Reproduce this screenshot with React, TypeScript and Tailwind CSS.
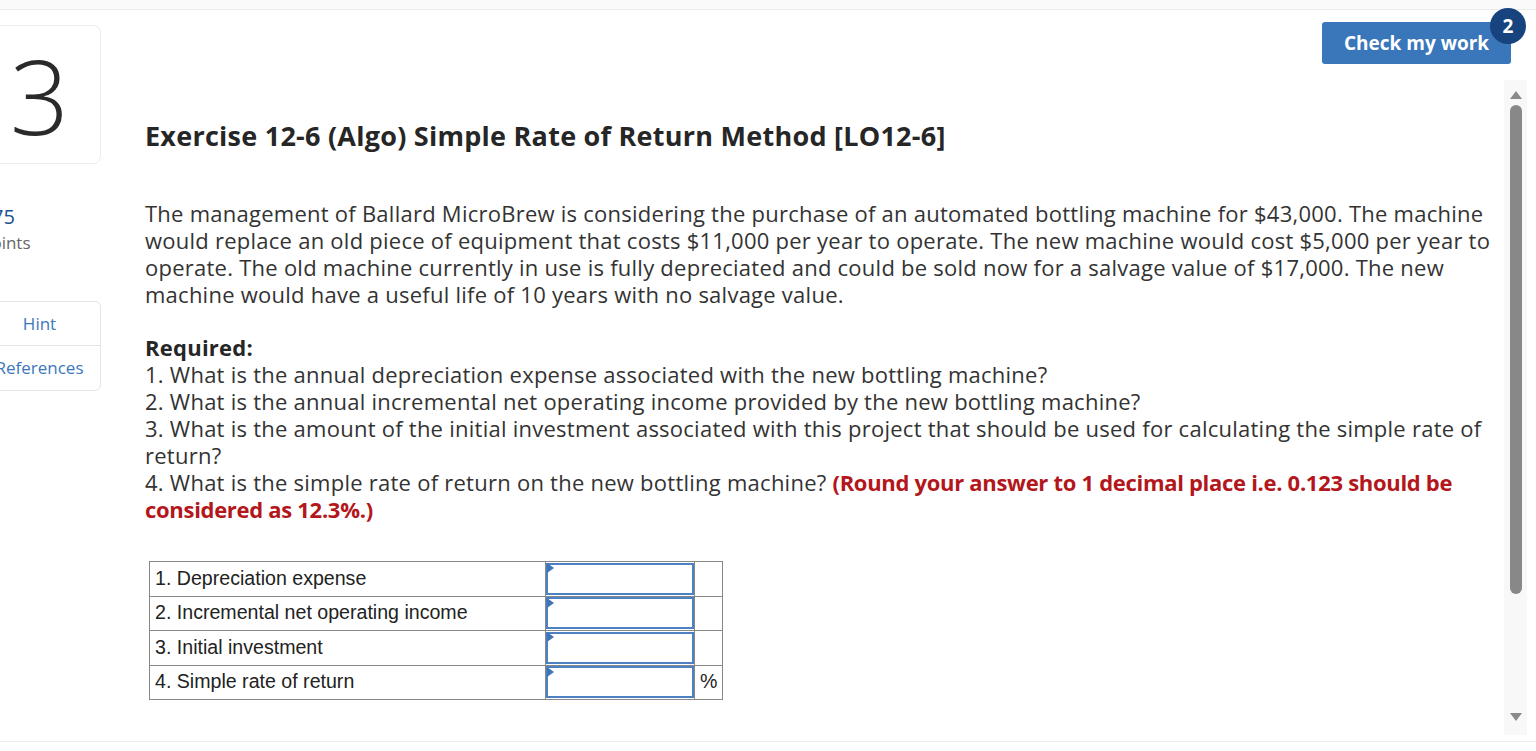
import React from 'react';

const rows = [
  { label: '1. Depreciation expense', unit: '' },
  { label: '2. Incremental net operating income', unit: '' },
  { label: '3. Initial investment', unit: '' },
  { label: '4. Simple rate of return', unit: '%' },
];

const intro = [
  'The management of Ballard MicroBrew is considering the purchase of an automated bottling machine for $43,000. The machine',
  'would replace an old piece of equipment that costs $11,000 per year to operate. The new machine would cost $5,000 per year to',
  'operate. The old machine currently in use is fully depreciated and could be sold now for a salvage value of $17,000. The new',
  'machine would have a useful life of 10 years with no salvage value.',
];

function AnswerRow({ label, unit }: { label: string; unit: string }) {
  return (
    <tr className="h-[34.5px]">
      <td className="border border-[#888] px-[5px] text-[19.6px] leading-none text-[#222]">{label}</td>
      <td className="relative border border-[#888] p-0">
        <div className="h-[32px] border-2 border-[#4d82c2] bg-white" />
        <span className="absolute left-[1px] top-[1px] h-0 w-0 border-y-[5px] border-l-[7px] border-y-transparent border-l-[#3d74ba]" />
      </td>
      <td className="border border-[#888] px-[5px] text-[19.6px] leading-none text-[#222]">{unit}</td>
    </tr>
  );
}

export default function App() {
  return (
    <div className="h-[751px] w-[1536px] overflow-hidden bg-white font-['Open_Sans',sans-serif] text-[#333]">
      <div className="h-[10px] border-b border-[#ececec] bg-[#fafafa]" />

      <div className="relative flex h-[732px] border-b border-[#ececec]">
        {/* left rail */}
        <div className="-ml-[22px] flex w-[123px] shrink-0 flex-col pt-[15px]">
          <div className="flex h-[139px] items-center justify-center rounded-[8px] border border-[#ececec] bg-white">
            <span className="text-[104px] leading-none font-light text-[#2a2a2a]">3</span>
          </div>
          <div className="mt-[40px]">
            <p className="pl-[14px] text-[20px] leading-[26px] text-[#1d4f91]">75</p>
            <p className="pl-[3px] text-[17px] leading-[26px] text-[#666]">points</p>
          </div>
          <div className="mt-[45px] rounded-[6px] border border-[#e4e4e4] text-[17px] text-[#3b77bb]">
            <div className="flex h-[44px] items-center justify-center border-b border-[#e4e4e4]">Hint</div>
            <div className="flex h-[44px] items-center justify-center">References</div>
          </div>
        </div>

        {/* question */}
        <div className="ml-[44px] min-w-0 flex-1 pt-[110px]">
          <h1 className="text-[27px] leading-[32px] font-bold tracking-[0.25px] whitespace-nowrap text-[#262626]">
            Exercise 12-6 (Algo) Simple Rate of Return Method [LO12-6]
          </h1>
          <div className="mt-[48px] text-[22px] leading-[27px] tracking-[0.25px] whitespace-nowrap">
            {intro.map((line) => (
              <p key={line}>{line}</p>
            ))}
          </div>
          <div className="mt-[26px] text-[22px] leading-[27px] tracking-[0.25px] whitespace-nowrap">
            <p className="font-bold text-[#262626]">Required:</p>
            <p>1. What is the annual depreciation expense associated with the new bottling machine?</p>
            <p>2. What is the annual incremental net operating income provided by the new bottling machine?</p>
            <p>3. What is the amount of the initial investment associated with this project that should be used for calculating the simple rate of</p>
            <p>return?</p>
            <p>
              4. What is the simple rate of return on the new bottling machine?{' '}
              <span className="font-bold tracking-[-0.3px] text-[#b3161b]">
                (Round your answer to 1 decimal place i.e. 0.123 should be
              </span>
            </p>
            <p className="font-bold tracking-[-0.3px] text-[#b3161b]">considered as 12.3%.)</p>
          </div>

          <table className="mt-[38px] ml-[4px] border-collapse font-['Liberation_Sans',Arial,sans-serif]">
            <colgroup>
              <col className="w-[396px]" />
              <col className="w-[149px]" />
              <col className="w-[28px]" />
            </colgroup>
            <tbody>
              {rows.map((r) => (
                <AnswerRow key={r.label} label={r.label} unit={r.unit} />
              ))}
            </tbody>
          </table>
        </div>

        {/* scrollbar */}
        <div className="mt-[70px] mb-[6px] mr-[9px] flex w-[23px] shrink-0 flex-col items-center bg-[#f8f8f8] py-[11px]">
          <span className="h-0 w-0 border-x-[6px] border-b-[8px] border-x-transparent border-b-[#8a8a8a]" />
          <div className="mt-[6px] h-[489px] w-[12px] rounded-full bg-[#888]" />
          <div className="flex-1" />
          <span className="mb-[3px] h-0 w-0 border-x-[6px] border-t-[8px] border-x-transparent border-t-[#8a8a8a]" />
        </div>

        {/* check my work */}
        <button className="absolute top-[12px] right-[25px] flex h-[42px] w-[189px] items-center justify-center rounded-[3px] bg-[#3a76ba] text-[19px] font-bold text-white">
          Check my work
          <span className="absolute -top-[14px] -right-[15px] flex h-[36px] w-[36px] items-center justify-center rounded-full bg-[#17447e] text-[19px] font-bold text-white">
            2
          </span>
        </button>
      </div>
    </div>
  );
}
